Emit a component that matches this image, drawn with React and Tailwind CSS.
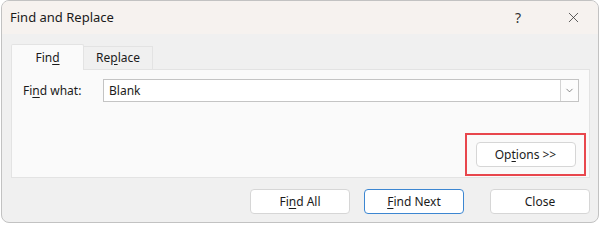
import { ChevronDown, X } from 'lucide-react';

function Btn({ children, primary, className = '' }) {
  return (
    <button
      type="button"
      className={
        'h-[25px] w-[100px] rounded-[4px] bg-white text-[12px] text-[#1b1b1b] flex items-center justify-center ' +
        (primary ? 'border border-[#3c86d1] ' : 'border border-[#d6d6d6] ') +
        className
      }
    >
      {children}
    </button>
  );
}

export default function App() {
  return (
    <div className="w-[600px] h-[225px] bg-white" style={{ fontFamily: '"Noto Sans", "Open Sans", sans-serif' }}>
      <div className="ml-[1px] w-[598px] h-[223px] rounded-[8px] border border-[#c2c2c2] bg-[#f0f0f0] overflow-hidden flex flex-col">
        {/* title bar */}
        <div className="h-[33px] bg-[#f6f2ef] flex items-center pl-[8px] shrink-0">
          <span className="text-[13px] text-[#1a1a1a] leading-none">Find and Replace</span>
          <span className="ml-auto mr-[44px] text-[14px] text-[#333]">?</span>
          <X className="mr-[16px] w-[17px] h-[17px] text-[#333]" strokeWidth={1.1} />
        </div>

        {/* tabs */}
        <div className="flex items-end pl-[9px] pt-[9px] h-[35px] shrink-0">
          <div className="w-[73px] h-[26px] bg-[#fafafa] border border-b-0 border-[#e3e3e3] flex items-center justify-center text-[12px] text-[#1b1b1b] relative z-10 -mb-px rounded-t-[2px]">
            <span>Fin<span className="underline underline-offset-2">d</span></span>
          </div>
          <div className="w-[69px] h-[23px] bg-[#f0f0f0] border border-b-0 border-l-0 border-[#e3e3e3] flex items-center justify-center text-[12px] text-[#1b1b1b]">
            <span>Re<span className="underline underline-offset-2">p</span>lace</span>
          </div>
        </div>

        {/* panel */}
        <div className="ml-[9px] w-[579px] h-[109px] bg-[#fafafa] border border-[#e3e3e3] shrink-0 flex flex-col">
          <div className="flex items-center h-[23px] mt-[9px] pl-[11px] pr-[10px]">
            <span className="w-[80px] text-[12px] text-[#1b1b1b]">
              Fi<span className="underline underline-offset-2">n</span>d what:
            </span>
            <div className="flex-1 h-[23px] bg-white border border-[#c4c4c4] flex items-center">
              <span className="pl-[5px] text-[12px] text-[#1b1b1b] flex-1">Blank</span>
              <div className="w-[18px] h-full border-l border-[#d4d4d4] flex items-center justify-center bg-[#fdfdfd]">
                <ChevronDown className="w-[11px] h-[11px] text-[#555]" strokeWidth={1.5} />
              </div>
            </div>
          </div>
          <div className="flex justify-end mt-auto mb-[1px] mr-[3px]">
            <div className="w-[121px] h-[43px] border-2 border-[#e8474d] flex items-center justify-center">
              <Btn className="border-[#d3d3d3]">
                <span>Op<span className="underline underline-offset-2">t</span>ions &gt;&gt;</span>
              </Btn>
            </div>
          </div>
        </div>

        {/* bottom buttons */}
        <div className="flex justify-end items-center pt-[11px] pr-[8px]">
          <Btn>
            <span>Fi<span className="underline underline-offset-2">n</span>d All</span>
          </Btn>
          <Btn primary className="ml-[14px]">
            <span><span className="underline underline-offset-2">F</span>ind Next</span>
          </Btn>
          <Btn className="ml-[26px]">Close</Btn>
        </div>
      </div>
    </div>
  );
}
